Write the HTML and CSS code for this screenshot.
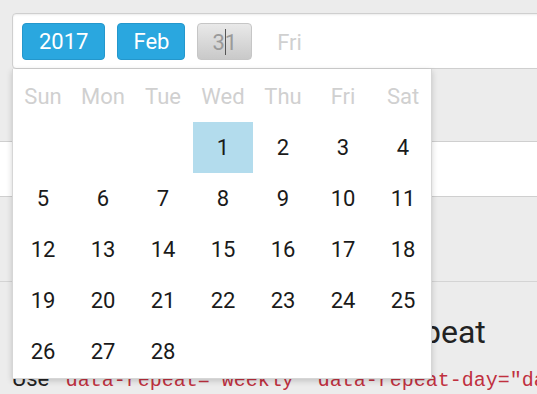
FILE: index.html
```html
<!DOCTYPE html>
<html lang="en">
<head>
    <meta charset="UTF-8">
    <meta name="viewport" content="width=device-width, initial-scale=1.0">
    <title>Dropdown Date Picker</title>
    <link rel="stylesheet" href="styles.css">
</head>
<body>
    <div class="page">
        <!-- Picker -->
        <div class="picker">
            <div class="field">
                <button class="part part-year">2017</button>
                <button class="part part-month">Feb</button>
                <button class="part part-day">3<span class="caret"></span>1</button>
                <span class="weekday">Fri</span>
            </div>

            <div class="popup">
                <div class="cal-grid">
                    <div class="cal-head">Sun</div>
                    <div class="cal-head">Mon</div>
                    <div class="cal-head">Tue</div>
                    <div class="cal-head">Wed</div>
                    <div class="cal-head">Thu</div>
                    <div class="cal-head">Fri</div>
                    <div class="cal-head">Sat</div>

                    <div class="cal-day empty"></div>
                    <div class="cal-day empty"></div>
                    <div class="cal-day empty"></div>
                    <div class="cal-day selected">1</div>
                    <div class="cal-day">2</div>
                    <div class="cal-day">3</div>
                    <div class="cal-day">4</div>

                    <div class="cal-day">5</div>
                    <div class="cal-day">6</div>
                    <div class="cal-day">7</div>
                    <div class="cal-day">8</div>
                    <div class="cal-day">9</div>
                    <div class="cal-day">10</div>
                    <div class="cal-day">11</div>

                    <div class="cal-day">12</div>
                    <div class="cal-day">13</div>
                    <div class="cal-day">14</div>
                    <div class="cal-day">15</div>
                    <div class="cal-day">16</div>
                    <div class="cal-day">17</div>
                    <div class="cal-day">18</div>

                    <div class="cal-day">19</div>
                    <div class="cal-day">20</div>
                    <div class="cal-day">21</div>
                    <div class="cal-day">22</div>
                    <div class="cal-day">23</div>
                    <div class="cal-day">24</div>
                    <div class="cal-day">25</div>

                    <div class="cal-day">26</div>
                    <div class="cal-day">27</div>
                    <div class="cal-day">28</div>
                </div>
            </div>
        </div>

        <!-- Demo content under the popup -->
        <input class="demo-input" type="text">
        <hr class="rule">
        <h2 class="section-title">Dropdown with the Weekly repeat</h2>
        <p class="section-text">Use <code>data-repeat="weekly" data-repeat-day="day"</code></p>
    </div>
</body>
</html>
```

FILE: styles.css
```css
body {
    margin: 0;
    background: #ececec;
    font-family: Roboto, 'Liberation Sans', sans-serif;
    color: #222;
    overflow: hidden;
}

.page {
    padding: 13px 0 0 12px;
}

.picker {
    position: relative;
}

.field {
    display: flex;
    align-items: center;
    gap: 12px;
    height: 54px;
    margin-right: -20px;
    padding: 0 9px;
    background: white;
    border: 1px solid #cfcfcf;
    border-radius: 4px 0 0 4px;
    box-shadow: inset 0 1px 2px rgba(0, 0, 0, 0.08);
}

.part {
    height: 37px;
    margin-top: 1px;
    padding: 0 16px;
    font-family: Roboto, 'Liberation Sans', sans-serif;
    font-size: 22px;
    color: white;
    background: #2aa7df;
    border: 1px solid #2497cc;
    border-radius: 4px;
}

.part-month {
    padding: 0 15px;
}

.part-day {
    padding: 0 14px;
    color: #9a9a9a;
    background: linear-gradient(to bottom, #e9e9e9, #c9c9c9);
    border-color: #c6c6c6;
}

.caret {
    display: inline-block;
    width: 1px;
    height: 26px;
    margin: 0 -1px -5px 0;
    background: #555;
    vertical-align: baseline;
}

.weekday {
    margin-left: 13px;
    margin-top: 2px;
    font-size: 22px;
    color: #d0d0d0;
}

.popup {
    position: absolute;
    top: 56px;
    left: 0;
    z-index: 2;
    width: 418px;
    padding-bottom: 1px;
    background: white;
    border: 1px solid #d6d6d6;
    border-top: none;
    box-shadow: 0 2px 6px rgba(0, 0, 0, 0.18);
}

.cal-grid {
    display: grid;
    grid-template-columns: repeat(7, 60px);
    grid-auto-rows: 51px;
    margin-top: 2px;
}

.cal-head,
.cal-day {
    display: flex;
    align-items: center;
    justify-content: center;
    font-size: 22px;
}

.cal-head {
    color: #d0d0d0;
}

.cal-day {
    color: #1a1a1a;
}

.cal-day.selected {
    background: #b3dced;
}

.demo-input {
    display: block;
    box-sizing: border-box;
    height: 56px;
    margin: 72px 0 0 -12px;
    width: calc(100% + 12px);
    background: white;
    border: none;
    border-top: 1px solid #cfcfcf;
    border-bottom: 1px solid #cfcfcf;
}

.rule {
    margin: 84px 0 0 -12px;
    border: none;
    border-top: 1px solid #d4d4d4;
}

.section-title {
    margin: 31px 0 0;
    font-size: 32px;
    font-weight: normal;
    line-height: 38px;
    color: #222;
    white-space: nowrap;
}

.section-text {
    margin: 15px 0 0;
    font-size: 22px;
    white-space: nowrap;
}

.section-text code {
    margin-left: 7px;
    padding: 0 4px;
    font-family: 'Liberation Mono', monospace;
    font-size: 20px;
    color: #c0303f;
}
```
